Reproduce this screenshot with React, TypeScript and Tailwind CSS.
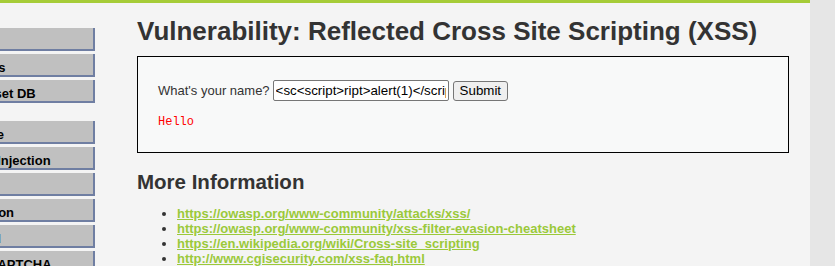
import React from "react";

const menuGroups: { label: string; shift: string }[][] = [
  [
    { label: "Home", shift: "ml-[-69px]" },
    { label: "Instructions", shift: "ml-[-69px]" },
    { label: "Setup / Reset DB", shift: "ml-[-69px]" },
  ],
  [
    { label: "Brute Force", shift: "ml-[-69px]" },
    { label: "Command Injection", shift: "ml-[-70px]" },
    { label: "CSRF", shift: "ml-[-69px]" },
    { label: "File Inclusion", shift: "ml-[-69px]" },
    { label: "File Upload", shift: "ml-[-69px]" },
    { label: "Insecure CAPTCHA", shift: "ml-[-69px]" },
  ],
];

const links = [
  "https://owasp.org/www-community/attacks/xss/",
  "https://owasp.org/www-community/xss-filter-evasion-cheatsheet",
  "https://en.wikipedia.org/wiki/Cross-site_scripting",
  "http://www.cgisecurity.com/xss-faq.html",
];

export default function App() {
  return (
    <div className="w-[835px] h-[266px] overflow-hidden bg-[#e6e6e6] font-['Liberation_Sans',Arial,sans-serif] text-[13px] text-[#333]">
      <div className="w-[810px] h-full bg-[#f4f4f4] border-t-[3px] border-[#a6cc38]">
        <div className="flex">
          <nav className="w-[95px] shrink-0 overflow-hidden pt-[25px]">
            {menuGroups.map((group, gi) => (
              <ul key={gi} className={gi > 0 ? "mt-[18px]" : ""}>
                {group.map((item) => (
                  <li
                    key={item.label}
                    className="h-[23px] mb-[3px] bg-[#c0c0c0] border-r-2 border-b-2 border-[#6f7ea2] pt-[6px] leading-[15px] overflow-hidden whitespace-nowrap font-bold text-black"
                  >
                    <span className={"block " + item.shift}>{item.label}</span>
                  </li>
                ))}
              </ul>
            ))}
          </nav>
          <main className="ml-[42px] w-[652px] shrink-0 pt-[13px]">
            <h1 className="text-[26px] leading-[30px] font-bold text-[#333] whitespace-nowrap">
              Vulnerability: Reflected Cross Site Scripting (XSS)
            </h1>
            <div className="mt-[10px] h-[97px] border border-black bg-[#f8f9f9] px-[20px] pt-[23px]">
              <form className="flex items-center h-[21px]" onSubmit={(e) => e.preventDefault()}>
                <span className="leading-[15px]">What's your name?</span>
                <input
                  readOnly
                  value="<sc<script>ript>alert(1)</script>"
                  className="ml-[3px] w-[176px] h-[21px] border border-[#767676] rounded-[2px] bg-white px-[2px] text-[13.33px] text-black font-['Liberation_Sans',Arial,sans-serif] outline-none"
                />
                <button
                  type="submit"
                  className="ml-[4px] h-[20px] px-[6px] border border-[#767676] rounded-[3px] bg-[#efefef] text-[13.33px] text-black leading-[16px]"
                >
                  Submit
                </button>
              </form>
              <pre className="mt-[14px] text-[12px] leading-[15px] text-[#ff0000] font-['Liberation_Mono','Courier_New',monospace]">
                Hello
              </pre>
            </div>
            <h2 className="mt-[17px] text-[20.5px] leading-[24px] font-bold text-[#333]">More Information</h2>
            <ul className="mt-[12px] pl-[40px] list-disc">
              {links.map((l) => (
                <li key={l} className="leading-[15px] marker:text-[#333]">
                  <a href="#" className="font-bold text-[#9bc93a] underline whitespace-nowrap">
                    {l}
                  </a>
                </li>
              ))}
            </ul>
          </main>
        </div>
      </div>
    </div>
  );
}
